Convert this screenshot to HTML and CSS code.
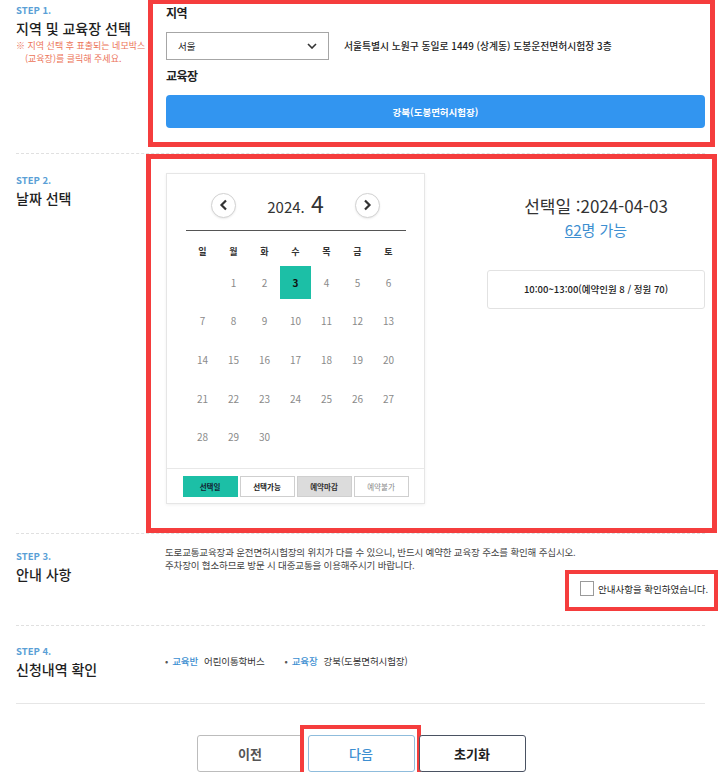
FILE: index.html
```html
<!DOCTYPE html>
<html lang="ko">
<head>
    <meta charset="UTF-8">
    <meta name="viewport" content="width=device-width, initial-scale=1.0">
    <title>교육 신청 - 날짜 선택</title>
    <link rel="stylesheet" href="styles.css">
</head>
<body>
    <div class="page">
        <!-- STEP 1 -->
        <section class="step step-1">
            <div class="step-head">
                <p class="step-no">STEP 1.</p>
                <h2 class="step-title">지역 및 교육장 선택</h2>
                <p class="step-note">※ 지역 선택 후 표출되는 네모박스<br><span class="indent">(교육장)를 클릭해 주세요.</span></p>
            </div>
            <div class="step-body mark area-box">
                <p class="field-label">지역</p>
                <div class="region-row">
                    <div class="select">
                        <span>서울</span>
                        <svg width="10" height="6" viewBox="0 0 10 6"><polyline points="1,1 5,5 9,1" fill="none" stroke="#333" stroke-width="1.6"/></svg>
                    </div>
                    <p class="address">서울특별시 노원구 동일로 1449 (상계동) 도봉운전면허시험장 3층</p>
                </div>
                <p class="field-label">교육장</p>
                <button class="place-btn">강북(도봉면허시험장)</button>
            </div>
        </section>

        <!-- STEP 2 -->
        <section class="step step-2">
            <div class="step-head">
                <p class="step-no">STEP 2.</p>
                <h2 class="step-title">날짜 선택</h2>
            </div>
            <div class="step-body mark date-box">
                <div class="calendar">
                    <div class="cal-head">
                        <button class="nav-btn">
                            <svg width="10" height="12" viewBox="0 0 10 12"><polyline points="7,1.5 2.5,6 7,10.5" fill="none" stroke="#333" stroke-width="2.2"/></svg>
                        </button>
                        <p class="cal-title">2024. <strong>4</strong></p>
                        <button class="nav-btn">
                            <svg width="10" height="12" viewBox="0 0 10 12"><polyline points="3,1.5 7.5,6 3,10.5" fill="none" stroke="#333" stroke-width="2.2"/></svg>
                        </button>
                    </div>
                    <div class="weekdays">
                        <span>일</span><span>월</span><span>화</span><span>수</span><span>목</span><span>금</span><span>토</span>
                    </div>
                    <div class="days">
                        <span></span><span>1</span><span>2</span><span class="selected">3</span><span>4</span><span>5</span><span>6</span>
                        <span>7</span><span>8</span><span>9</span><span>10</span><span>11</span><span>12</span><span>13</span>
                        <span>14</span><span>15</span><span>16</span><span>17</span><span>18</span><span>19</span><span>20</span>
                        <span>21</span><span>22</span><span>23</span><span>24</span><span>25</span><span>26</span><span>27</span>
                        <span>28</span><span>29</span><span>30</span>
                    </div>
                    <div class="legend">
                        <span class="lg lg-selected">선택일</span>
                        <span class="lg lg-open">선택가능</span>
                        <span class="lg lg-closed">예약마감</span>
                        <span class="lg lg-off">예약불가</span>
                    </div>
                </div>
                <div class="date-info">
                    <p class="date-picked">선택일 :2024-04-03</p>
                    <p class="date-left"><u>62</u>명 가능</p>
                    <div class="time-slot">10:00~13:00(예약인원 8 / 정원 70)</div>
                </div>
            </div>
        </section>

        <!-- STEP 3 -->
        <section class="step step-3">
            <div class="step-head">
                <p class="step-no">STEP 3.</p>
                <h2 class="step-title">안내 사항</h2>
            </div>
            <div class="step-body">
                <p class="notice">도로교통교육장과 운전면허시험장의 위치가 다를 수 있으니, 반드시 예약한 교육장 주소를 확인해 주십시오.<br>주차장이 협소하므로 방문 시 대중교통을 이용해주시기 바랍니다.</p>
                <div class="agree-row">
                    <label class="mark agree">
                        <span class="check"></span>
                        <span>안내사항을 확인하였습니다.</span>
                    </label>
                </div>
            </div>
        </section>

        <!-- STEP 4 -->
        <section class="step step-4">
            <div class="step-head">
                <p class="step-no">STEP 4.</p>
                <h2 class="step-title">신청내역 확인</h2>
            </div>
            <div class="step-body">
                <ul class="summary">
                    <li><b>교육반</b>어린이통학버스</li>
                    <li><b>교육장</b>강북(도봉면허시험장)</li>
                </ul>
            </div>
        </section>

        <div class="actions">
            <button class="act act-prev">이전</button>
            <button class="act act-next">다음</button>
            <button class="act act-reset">초기화</button>
        </div>
    </div>
</body>
</html>
```

FILE: styles.css
```css
* {
    box-sizing: border-box;
}

body {
    margin: 0;
    background: #fff;
    font-family: "Noto Sans CJK KR", "Noto Sans", sans-serif;
    color: #222;
    overflow: hidden;
}

p, h2, ul {
    margin: 0;
    padding: 0;
}

button {
    font-family: inherit;
    cursor: pointer;
}

.page {
    width: 720px;
    padding: 0 15px 0 16px;
}

/* step rows */
.step {
    display: flex;
    border-bottom: 1px dashed #e0e0e0;
}

.step-head {
    flex-shrink: 0;
}

.step-no {
    font-size: 9.5px;
    line-height: 13px;
    font-weight: 700;
    color: #5a9fd6;
}

.step-title {
    margin-top: 2px;
    font-size: 14px;
    line-height: 18px;
    font-weight: 500;
    color: #1e1e1e;
}

.step-note {
    margin-top: 2px;
    font-size: 9px;
    line-height: 13px;
    color: #ec7458;
    white-space: nowrap;
}

.indent {
    padding-left: 9px;
}

.step-body {
    flex: 1;
}

/* red guide boxes */
.mark {
    border: 5px solid #f53d3d;
}

/* STEP 1 */
.step-1 {
    padding-bottom: 6px;
}

.step-1 .step-head {
    width: 132px;
    padding-top: 4px;
}

.area-box {
    flex: none;
    width: 567px;
    margin-right: -10px;
    border-top-width: 4px;
    padding: 1px 3px 14px 13px;
}

.field-label {
    font-size: 12px;
    line-height: 15px;
    font-weight: 700;
    letter-spacing: -0.5px;
    color: #1e1e1e;
}

.region-row {
    display: flex;
    align-items: center;
    gap: 15px;
    margin: 12px 0 8px;
}

.select {
    width: 163px;
    height: 28px;
    border: 1px solid #a6a6a6;
    display: flex;
    align-items: center;
    justify-content: space-between;
    padding: 0 11px 0 11px;
    font-size: 9.5px;
}

.address {
    font-size: 9.8px;
    font-weight: 500;
    color: #222;
}

.place-btn {
    display: block;
    width: 539px;
    height: 33px;
    margin-top: 12px;
    border: none;
    border-radius: 4px;
    background: #3295f0;
    color: #fff;
    font-size: 9.5px;
    font-weight: 700;
}

/* STEP 2 */
.step-2 .step-head {
    width: 130px;
    padding-top: 20px;
}

.date-box {
    flex: none;
    width: 571px;
    margin-right: -12px;
    display: flex;
    padding: 14px 3px 24px 15px;
}

.calendar {
    width: 259px;
    border: 1px solid #e6e6e6;
    box-shadow: 0 1px 3px rgba(0, 0, 0, 0.06);
    padding-top: 18px;
}

.cal-head {
    display: flex;
    align-items: center;
    justify-content: space-between;
    width: 169px;
    margin: 0 auto;
    height: 26px;
    position: relative;
}

.cal-head::after {
    content: "";
    position: absolute;
    left: -25px;
    right: -26px;
    bottom: -13px;
    border-bottom: 1px solid #555;
}

.nav-btn {
    width: 25px;
    height: 25px;
    padding: 0;
    border: 1px solid #d2d2d2;
    border-radius: 50%;
    background: #fff;
    box-shadow: 0 1px 2px rgba(0, 0, 0, 0.08);
    display: flex;
    align-items: center;
    justify-content: center;
}

.cal-title {
    font-size: 15px;
    color: #333;
    line-height: 26px;
}

.cal-title strong {
    font-size: 23px;
    font-weight: 400;
    margin-left: 2px;
}

.weekdays,
.days {
    display: grid;
    grid-template-columns: repeat(7, 1fr);
    margin: 0 20px;
    text-align: center;
}

.weekdays {
    margin-top: 14px;
    padding: 13px 0 5px;
    font-size: 9px;
    line-height: 13px;
    font-weight: 700;
    color: #333;
}

.days {
    grid-auto-rows: 38.6px;
    align-items: center;
    font-size: 10px;
    color: #8a8a8a;
}

.days span {
    height: 33px;
    line-height: 33px;
}

.days .selected {
    background: #1cbfa6;
    color: #111;
    font-weight: 700;
}

.legend {
    display: flex;
    justify-content: center;
    gap: 2px;
    margin-top: 12px;
    padding: 7px 0 6px;
    border-top: 1px solid #e8e8e8;
}

.lg {
    width: 55px;
    height: 21px;
    line-height: 19px;
    text-align: center;
    font-size: 7.5px;
    font-weight: 700;
    border: 1px solid #cfcfcf;
    color: #222;
    background: #fff;
}

.lg-selected {
    background: #1cbfa6;
    border-color: #1cbfa6;
    color: #123;
}

.lg-closed {
    background: #dcdcdc;
    color: #333;
}

.lg-off {
    font-weight: 400;
    color: #888;
}

.date-info {
    width: 218px;
    margin-left: 62px;
    padding-top: 22px;
    text-align: center;
}

.date-picked {
    font-size: 17px;
    line-height: 22px;
    color: #333;
}

.date-left {
    margin-top: 3px;
    font-size: 15px;
    line-height: 20px;
    color: #3d8fd1;
}

.time-slot {
    margin-top: 30px;
    height: 39px;
    line-height: 37px;
    border: 1px solid #e2e2e2;
    border-radius: 3px;
    font-size: 9.5px;
    font-weight: 500;
    color: #222;
}

/* STEP 3 */
.step-3 {
    padding-bottom: 14px;
}

.step-3 .step-head {
    width: 149px;
    padding-top: 16px;
}

.notice {
    padding-top: 12px;
    font-size: 9.5px;
    line-height: 13px;
    letter-spacing: -0.15px;
    color: #444;
}

.agree-row {
    display: flex;
    justify-content: flex-end;
    margin: -2px -13px 0 0;
}

.agree {
    border-width: 4px;
    width: 153px;
    height: 41px;
    display: flex;
    align-items: center;
    gap: 4px;
    padding: 0 0 3px 11px;
    font-size: 9.5px;
    color: #222;
}

.check {
    width: 14px;
    height: 15px;
    border: 1px solid #9a9a9a;
    background: #fff;
}

/* STEP 4 */
.step-4 {
    border-bottom: 1px solid #e6e6e6;
    padding-bottom: 25px;
}

.step-4 .step-head {
    width: 149px;
    padding-top: 19px;
}

.summary {
    list-style: none;
    display: flex;
    gap: 20px;
    padding-top: 27px;
    font-size: 9.5px;
    line-height: 16px;
    letter-spacing: -0.1px;
    color: #333;
}

.summary li::before {
    content: "•";
    margin-right: 4px;
    color: #555;
}

.summary b {
    font-weight: 500;
    color: #3d8fd1;
    margin-right: 6px;
}

/* buttons */
.actions {
    display: flex;
    justify-content: center;
    gap: 4px;
    margin-top: 31px;
    padding-left: 1px;
}

.act {
    width: 107px;
    height: 37px;
    border-radius: 3px;
    background: #fff;
    font-size: 13px;
    font-weight: 700;
    border: 1px solid #bcbcbc;
    color: #555;
    position: relative;
}

.act-next {
    border-color: #8fbcdc;
    color: #3d8fd1;
    font-weight: 500;
}

.act-next::after {
    content: "";
    position: absolute;
    left: -9px;
    right: -7px;
    top: -11px;
    bottom: -12px;
    border: 4px solid #f53d3d;
}

.act-reset {
    border-color: #4a5262;
    color: #1e1e1e;
}
```
